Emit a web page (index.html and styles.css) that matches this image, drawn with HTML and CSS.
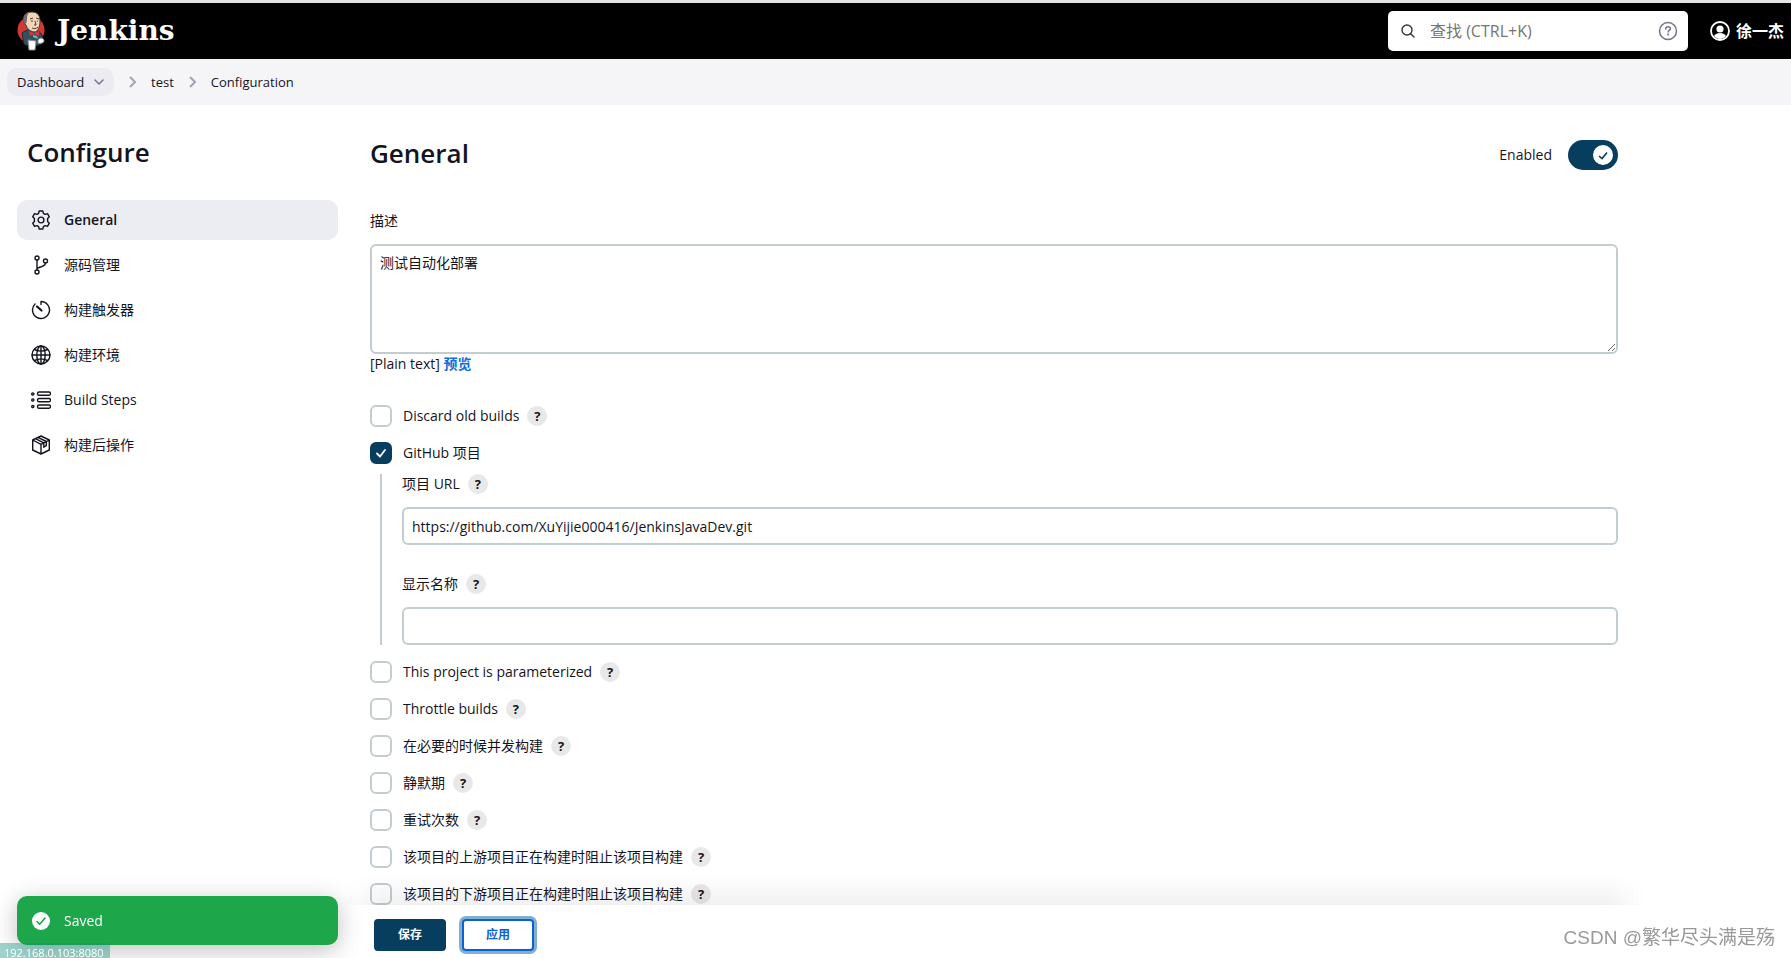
FILE: index.html
```html
<!DOCTYPE html>
<html lang="zh-CN">
<head>
  <meta charset="UTF-8" />
  <title>test Config [Jenkins]</title>
  <link rel="stylesheet" href="styles.css">
</head>
<body>
  <header class="header">
    <a class="logo" href="#">
      <svg width="28" height="40" viewBox="0 0 28 40">
        <circle cx="14" cy="19" r="13.500" fill="#d33833"/>
        <path d="M5 22c2-2 5-3 8-3l6 1c4 0 6 3 7 7l-2 6c-5 3-13 3-17 0z" fill="#335061" stroke="#1d2b33"/>
        <path d="M7 9C6 4 10 1 15 1c6 0 8 4 8 9 0 6-2 11-6 11-5-1-7-4-8-7-2-1-3-3-2-5z" fill="#f0d6b7" stroke="#4a3b33"/>
        <path d="M7 12C5 6 8 1 13 1 10 3 10 6 10 9l-1 4z" fill="#6d6b6d"/>
        <path d="M13 8l3-1M19 7l3 1M14 10h2M20 10h1M18 10l1 4h-2M15 17c2 1 4 1 6-1" fill="none" stroke="#4a3b33"/>
        <path d="M12 20l5 2 5-2v5l-5-2-4 2z" fill="#d33833"/>
        <path d="M16 24l4 1 1 3-5-2z" fill="#81b0c4"/>
        <path d="M11 29l8 1-1 9h-6z" fill="#fff" stroke="#8b8b8b"/>
        <path d="M21 29c2-3 6-2 6 1 0 2-4 3-6 2z" fill="#fff" stroke="#8b8b8b"/>
      </svg>
      <span>Jenkins</span>
    </a>
    <div class="search">
      <svg width="14" height="14" viewBox="0 0 14 14" fill="none" stroke="#333340" stroke-width="1.4" stroke-linecap="round"><circle cx="6" cy="6" r="5"/><path d="M9.700 9.700L13 13"/></svg>
      <input type="text" aria-label="查找" placeholder="查找 (CTRL+K)">
      <a class="search-help" href="#" aria-label="帮助">
        <svg width="20" height="20" viewBox="0 0 20 20" fill="none" stroke="#73738c" stroke-width="1.5" stroke-linecap="round"><circle cx="10" cy="10" r="8.500"/><path d="M7.800 8c0-3 4.600-2.800 4.600-.2 0 1.600-2.200 1.700-2.200 3.200"/><circle cx="10.200" cy="13.600" r=".4"/></svg>
      </a>
    </div>
    <a class="user" href="#">
      <svg width="20" height="20" viewBox="0 0 20 20"><circle cx="10" cy="10" r="9" fill="none" stroke="#fff" stroke-width="1.800"/><circle cx="10" cy="8" r="3.600" fill="#fff"/><path d="M4 15c2-4 10-4 12 0-3 4-9 4-12 0z" fill="#fff"/></svg>
      <span>徐一杰</span>
    </a>
  </header>

  <nav class="breadcrumbs">
    <a class="crumb crumb-active" href="#">Dashboard
      <svg width="10" height="6" viewBox="0 0 10 6" fill="none" stroke="#73738c" stroke-width="1.500" stroke-linecap="round" stroke-linejoin="round"><path d="M1 1l4 4 4-4"/></svg>
    </a>
    <svg class="sep" width="7" height="12" viewBox="0 0 7 12"><path d="M1 1l5 5-5 5"/></svg>
    <a class="crumb" href="#">test</a>
    <svg class="sep" width="7" height="12" viewBox="0 0 7 12"><path d="M1 1l5 5-5 5"/></svg>
    <a class="crumb" href="#">Configuration</a>
  </nav>

  <div class="page">
    <aside class="sidebar">
      <h1>Configure</h1>
      <nav class="tasks">
        <a class="task active" href="#">
          <svg viewBox="0 0 20 20"><circle cx="10" cy="10" r="2.900"/><path d="M8.200 1h3.600l.6 2.400 1.700 1 2.400-.7 1.800 3.100-1.700 1.700v3l1.700 1.700-1.800 3.100-2.400-.7-1.700 1-.6 2.400H8.200l-.6-2.400-1.700-1-2.400.7-1.800-3.100 1.700-1.700v-3L1.700 6.800l1.800-3.100 2.400.7 1.700-1z"/></svg>
          General
        </a>
        <a class="task" href="#">
          <svg viewBox="0 0 20 20"><circle cx="6" cy="3" r="2"/><circle cx="14.500" cy="6" r="2"/><circle cx="6" cy="17" r="2"/><path d="M6 5v10M14.500 8c0 4-6 3.500-8.500 5.500"/></svg>
          源码管理
        </a>
        <a class="task" href="#">
          <svg viewBox="0 0 20 20"><path d="M10 4.500V1.500a8.500 8.500 0 1 1-6 2.500"/><path d="M6 6.500l4.500 4" stroke-width="2.200"/></svg>
          构建触发器
        </a>
        <a class="task" href="#">
          <svg viewBox="0 0 20 20"><circle cx="10" cy="10" r="9"/><ellipse cx="10" cy="10" rx="4.200" ry="9"/><path d="M10 1v18M1 10h18M3.500 4.500c4 2 9 2 13 0M3.500 15.500c4-2 9-2 13 0"/></svg>
          构建环境
        </a>
        <a class="task" href="#">
          <svg viewBox="0 0 20 20"><circle cx="1.800" cy="4" r="1.100"/><circle cx="1.800" cy="10" r="1.100"/><circle cx="1.800" cy="16.500" r="1.100"/><rect x="6.500" y="2" width="13" height="3.300" rx="1.600"/><rect x="6.500" y="8.500" width="13" height="3.300" rx="1.600"/><rect x="6.500" y="15" width="13" height="3.300" rx="1.600"/></svg>
          Build Steps
        </a>
        <a class="task" href="#">
          <svg viewBox="0 0 20 20"><path d="M10 1l8.300 4v10L10 19l-8.300-4V5zM1.700 5L10 9.300 18.300 5M10 9.300V19M4.500 3.700l8.300 4.200v4.300l2.500-1.500V6.500L7 2.400"/></svg>
          构建后操作
        </a>
      </nav>
    </aside>

    <main class="main">
      <form class="config">
        <div class="section-head">
          <h2>General</h2>
          <label class="toggle">Enabled <input type="checkbox" checked></label>
        </div>

        <div class="description">
          <label class="field-label" for="description">描述</label>
          <textarea id="description">测试自动化部署</textarea>
          <div class="preview">[Plain text] <a href="#">预览</a></div>
        </div>

        <div class="options">
          <div class="option">
            <label><input type="checkbox"> Discard old builds</label>
            <a class="help" href="#">?</a>
          </div>
          <div class="option">
            <label><input type="checkbox" checked> GitHub 项目</label>
          </div>
        </div>

        <div class="nested">
          <div class="field">
            <div class="field-head">
              <label for="project-url">项目 URL</label>
              <a class="help" href="#">?</a>
            </div>
            <input type="text" id="project-url" value="https://github.com/XuYijie000416/JenkinsJavaDev.git">
          </div>
          <div class="field">
            <div class="field-head">
              <label for="display-name">显示名称</label>
              <a class="help" href="#">?</a>
            </div>
            <input type="text" id="display-name">
          </div>
        </div>

        <div class="options">
          <div class="option">
            <label><input type="checkbox"> This project is parameterized</label>
            <a class="help" href="#">?</a>
          </div>
          <div class="option">
            <label><input type="checkbox"> Throttle builds</label>
            <a class="help" href="#">?</a>
          </div>
          <div class="option">
            <label><input type="checkbox"> 在必要的时候并发构建</label>
            <a class="help" href="#">?</a>
          </div>
          <div class="option">
            <label><input type="checkbox"> 静默期</label>
            <a class="help" href="#">?</a>
          </div>
          <div class="option">
            <label><input type="checkbox"> 重试次数</label>
            <a class="help" href="#">?</a>
          </div>
          <div class="option">
            <label><input type="checkbox"> 该项目的上游项目正在构建时阻止该项目构建</label>
            <a class="help" href="#">?</a>
          </div>
          <div class="option">
            <label><input type="checkbox"> 该项目的下游项目正在构建时阻止该项目构建</label>
            <a class="help" href="#">?</a>
          </div>
        </div>
      </form>

      <div class="bottom-bar">
        <button class="btn btn-primary" type="button">保存</button>
        <button class="btn btn-apply" type="button">应用</button>
      </div>
    </main>
  </div>

  <div class="notification">
    <svg width="20" height="20" viewBox="0 0 20 20"><circle cx="10" cy="10" r="9" fill="#fff"/><path d="M6 10.500l2.700 2.700L14 7" fill="none" stroke="#1ea64b" stroke-width="1.600" stroke-linecap="round" stroke-linejoin="round"/></svg>
    Saved
  </div>
  <div class="status-url">192.168.0.103:8080</div>
  <div class="watermark">CSDN @繁华尽头满是殇</div>
</body>
</html>
```
FILE: styles.css
```css
* {
  box-sizing: border-box;
}

body {
  margin: 0;
  height: 100vh;
  display: flex;
  flex-direction: column;
  overflow: hidden;
  border-top: 3px solid #e4e4e4;
  font-family: "Open Sans", "Noto Sans CJK SC", sans-serif;
  font-size: 14px;
  line-height: 20px;
  color: #14141f;
  background: #fff;
}

a {
  color: inherit;
  text-decoration: none;
}

input,
textarea,
button {
  font: inherit;
  color: inherit;
}

/* header */
.header {
  display: flex;
  align-items: center;
  height: 56px;
  flex-shrink: 0;
  padding: 0 7px 0 17px;
  background: #000;
  color: #fff;
}

.logo {
  display: flex;
  align-items: center;
  gap: 12px;
  margin-right: auto;
  font-family: "DejaVu Serif", serif;
  font-size: 28px;
  font-weight: bold;
}

.search {
  display: flex;
  align-items: center;
  width: 300px;
  height: 40px;
  padding: 0 10px 0 13px;
  border-radius: 5px;
  background: #fff;
}

.search input {
  flex: 1;
  min-width: 0;
  padding: 0 0 0 15px;
  border: none;
  outline: none;
  background: none;
  font-size: 16px;
}

.search input::placeholder {
  color: #757575;
}

.search-help {
  display: flex;
}

.user {
  display: flex;
  align-items: center;
  gap: 6px;
  margin-left: 22px;
  font-size: 16px;
  font-weight: bold;
}

/* breadcrumbs */
.breadcrumbs {
  display: flex;
  align-items: center;
  height: 46px;
  flex-shrink: 0;
  padding: 0 7px;
  background: #f5f5f8;
  font-size: 13px;
}

.crumb-active {
  display: flex;
  align-items: center;
  gap: 10px;
  height: 28px;
  padding: 0 10px;
  border-radius: 10px;
  background: #ebebf1;
}

.sep {
  margin: 0 15px;
  fill: none;
  stroke: #a3a3b8;
  stroke-width: 2;
}

/* page */
.page {
  display: flex;
  flex: 1;
  min-height: 0;
  gap: 32px;
  padding: 0 17px;
}

.sidebar {
  width: 321px;
  flex-shrink: 0;
  padding-top: 27px;
}

h1,
h2 {
  margin: 0;
  font-size: 26px;
  font-weight: 600;
  line-height: 40px;
}

h1 {
  padding-left: 10px;
}

.tasks {
  display: flex;
  flex-direction: column;
  gap: 5px;
  margin-top: 28px;
}

.task {
  display: flex;
  align-items: center;
  gap: 13px;
  height: 40px;
  padding: 0 14px;
  border-radius: 10px;
}

.task.active {
  background: #ebedf3;
  font-weight: 600;
}

.task svg {
  width: 20px;
  height: 20px;
  fill: none;
  stroke: #14141f;
  stroke-width: 1.4;
  stroke-linecap: round;
  stroke-linejoin: round;
}

.main {
  display: flex;
  flex: 1;
  flex-direction: column;
  min-width: 0;
  max-width: 1248px;
}

.config {
  flex: 1;
  min-height: 0;
  padding-top: 28px;
}

.section-head {
  display: flex;
  align-items: flex-end;
  justify-content: space-between;
}

.toggle {
  display: flex;
  align-items: center;
  gap: 16px;
  padding-bottom: 3px;
}

.toggle input {
  appearance: none;
  width: 50px;
  height: 30px;
  margin: 0;
  border-radius: 15px;
  background: #073e60 url("data:image/svg+xml,%3Csvg xmlns='http://www.w3.org/2000/svg' width='20' height='20'%3E%3Ccircle cx='10' cy='10' r='10' fill='white'/%3E%3Cpath d='M6 11l3 2.500 5-6' fill='none' stroke='%23073e60' stroke-width='1.6'/%3E%3C/svg%3E") no-repeat right 5px center;
}

.description {
  display: flex;
  flex-direction: column;
  margin: 38px 0 31px;
}

textarea {
  display: block;
  width: 100%;
  height: 110px;
  margin-top: 13px;
  padding: 7px 8px;
  border: 2px solid #c3ccd1;
  border-radius: 6px;
  outline: none;
  background: #fff;
  resize: vertical;
}

.preview a {
  color: #0b6fe0;
  font-weight: bold;
}

.options {
  display: flex;
  flex-direction: column;
  gap: 15px;
}

.option,
.field-head {
  display: flex;
  align-items: center;
  gap: 8px;
}

.option label {
  display: flex;
  align-items: center;
  gap: 11px;
  height: 22px;
}

.option input {
  appearance: none;
  width: 22px;
  height: 22px;
  margin: 0;
  border: 2px solid #c3ccd1;
  border-radius: 6px;
  background: #fff;
}

.option input:checked {
  border-color: #073e60;
  background: #073e60 url("data:image/svg+xml,%3Csvg xmlns='http://www.w3.org/2000/svg' width='12' height='12'%3E%3Cpath d='M2 6.500l3 3 5-6.500' fill='none' stroke='white' stroke-width='1.8' stroke-linecap='round' stroke-linejoin='round'/%3E%3C/svg%3E") no-repeat center;
}

.help {
  width: 20px;
  height: 20px;
  border-radius: 50%;
  background: #e8e8e8;
  font-size: 13px;
  font-weight: bold;
  text-align: center;
}

.nested {
  display: flex;
  flex-direction: column;
  gap: 29px;
  margin: 10px 0 16px 10px;
  padding-left: 20px;
  border-left: 2px solid #c3ccd1;
}

.field input {
  display: block;
  width: 100%;
  height: 38px;
  margin-top: 13px;
  padding: 0 8px;
  border: 2px solid #c3ccd1;
  border-radius: 6px;
  outline: none;
  background: #fff;
}

/* save / apply bar */
.bottom-bar {
  position: relative;
  display: flex;
  gap: 16px;
  height: 53px;
  flex-shrink: 0;
  margin: 0 -27px;
  padding: 14px 31px 0;
  background: #fff;
}

/* shadow above the bar, faded out at both ends */
.bottom-bar::before {
  content: "";
  position: absolute;
  left: 0;
  right: 0;
  bottom: 100%;
  height: 30px;
  background: linear-gradient(to top, rgba(0, 0, 0, 0.06), rgba(0, 0, 0, 0));
  mask-image: linear-gradient(to right, transparent, #000 40px, #000 calc(100% - 40px), transparent);
  pointer-events: none;
}

.btn {
  width: 72px;
  height: 32px;
  padding: 0;
  border: none;
  border-radius: 4px;
  font-size: 12px;
  font-weight: bold;
  cursor: pointer;
}

.btn-primary {
  background: #073e60;
  color: #fff;
}

.btn-apply {
  border: 2px solid #0b60d6;
  background: #fff;
  color: #0b60d6;
  box-shadow: 0 0 0 3px #81b0cf;
}

/* overlays */
.notification {
  position: fixed;
  left: 17px;
  bottom: 13px;
  display: flex;
  align-items: center;
  gap: 13px;
  width: 321px;
  height: 49px;
  padding: 0 14px;
  border-radius: 10px;
  background: #1ea64b;
  color: #fff;
  font-weight: 500;
  box-shadow: 0 5px 25px rgba(0, 0, 0, 0.25);
}

.status-url {
  position: fixed;
  left: 0;
  bottom: 0;
  height: 15px;
  padding: 0 6px 0 4px;
  border-radius: 0 2px 0 0;
  background: rgba(18, 145, 125, 0.4);
  color: #fff;
  font-size: 11px;
}

.watermark {
  position: fixed;
  right: 16px;
  bottom: 10px;
  color: #999;
  font-family: "Liberation Sans", "Noto Sans CJK SC", sans-serif;
  font-size: 19px;
  text-shadow: -1px -1px 0 #fff;
}
```
